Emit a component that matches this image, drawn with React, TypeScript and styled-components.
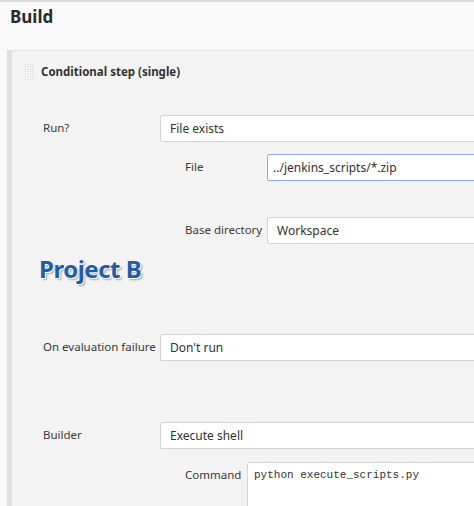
import styled, { createGlobalStyle } from "styled-components";

const GlobalStyle = createGlobalStyle`
  html, body {
    margin: 0;
    padding: 0;
    background: #fafafa;
    overflow: hidden;
  }
  body {
    font-family: "Noto Sans", "Open Sans", Arial, sans-serif;
    color: #333;
  }
`;

const Page = styled.div`
  width: 474px;
  height: 506px;
  overflow: hidden;
  border-top: 2px solid #dcdcdc;
  box-sizing: border-box;
`;

const TopBar = styled.header`
  height: 48px;
  padding-left: 10px;
  background: #f9f9f9;
`;

const PageTitle = styled.h2`
  margin: 0;
  padding-top: 3px;
  font-size: 17px;
  font-weight: 700;
  color: #2b2b2b;
  line-height: 24px;
`;

const Panel = styled.section`
  margin-left: 7px;
  width: 560px;
  min-height: 460px;
  background: #f3f3f3;
  border-top: 1px solid #e2e2e2;
  border-left: 5px solid #e0e0e0;
`;

const StepHeader = styled.div`
  display: flex;
  align-items: center;
  gap: 7px;
  padding: 12px 0 0 12px;
`;

const DragHandle = styled.span`
  width: 10px;
  height: 17px;
  background-color: #f7f7f7;
  background-image: radial-gradient(circle, #cfcfcf 0.6px, transparent 0.9px);
  background-size: 2.5px 2.5px;
`;

const StepTitle = styled.h3`
  margin: 0;
  font-size: 11.5px;
  font-weight: 700;
  color: #333;
`;

const Form = styled.div`
  display: flex;
  flex-direction: column;
  padding-left: 31px;
`;

const Row = styled.div<{ $top: number; $indent?: number; $labelWidth: number }>`
  display: grid;
  grid-template-columns: ${(p) => p.$labelWidth}px 1fr;
  align-items: start;
  margin-top: ${(p) => p.$top}px;
  padding-left: ${(p) => p.$indent ?? 0}px;
`;

const Label = styled.label`
  font-size: 11.5px;
  line-height: 26px;
  color: #3a3a3a;
  white-space: nowrap;
`;

const SelectBox = styled.div`
  height: 27px;
  box-sizing: border-box;
  padding: 0 9px;
  display: flex;
  align-items: center;
  background: #fff;
  border: 1px solid #d4d4d4;
  border-radius: 2px;
  font-size: 12px;
  color: #333;
`;

const TextInput = styled.div<{ $focused?: boolean }>`
  height: 27px;
  box-sizing: border-box;
  padding: 0 5px;
  display: flex;
  align-items: center;
  background: #fff;
  border: 1px solid ${(p) => (p.$focused ? "#8eaae6" : "#d4d4d4")};
  border-radius: 2px;
  font-size: 12px;
  color: #333;
`;

const CodeArea = styled.div`
  height: 60px;
  box-sizing: border-box;
  padding: 4px 6px;
  background: #fff;
  border: 1px solid #d4d4d4;
  border-radius: 2px;
  font-family: "Liberation Mono", "DejaVu Sans Mono", monospace;
  font-size: 11px;
  line-height: 16px;
  color: #333;
`;

const Annotation = styled.div`
  margin: 9px 0 0 -4px;
  font-size: 24px;
  font-weight: 700;
  letter-spacing: -0.5px;
  color: #1f5cab;
  text-shadow: 0 0 2px #fff, 1px 1px 0 #fff, 2px 2px 2px rgba(0, 0, 0, 0.35);
  line-height: 32px;
`;

export default function App() {
  return (
    <>
      <GlobalStyle />
      <Page>
        <TopBar>
          <PageTitle>Build</PageTitle>
        </TopBar>
        <Panel>
          <StepHeader>
            <DragHandle />
            <StepTitle>Conditional step (single)</StepTitle>
          </StepHeader>
          <Form>
            <Row $top={35} $labelWidth={117}>
              <Label>Run?</Label>
              <SelectBox>File exists</SelectBox>
            </Row>
            <Row $top={12} $indent={142} $labelWidth={82}>
              <Label>File</Label>
              <TextInput $focused>../jenkins_scripts/*.zip</TextInput>
            </Row>
            <Row $top={36} $indent={142} $labelWidth={82}>
              <Label>Base directory</Label>
              <SelectBox>Workspace</SelectBox>
            </Row>
            <Annotation>Project B</Annotation>
            <Row $top={49} $labelWidth={117}>
              <Label>On evaluation failure</Label>
              <SelectBox>Don't run</SelectBox>
            </Row>
            <Row $top={61} $labelWidth={117}>
              <Label>Builder</Label>
              <SelectBox>Execute shell</SelectBox>
            </Row>
            <Row $top={13} $indent={142} $labelWidth={62}>
              <Label>Command</Label>
              <CodeArea>python execute_scripts.py</CodeArea>
            </Row>
          </Form>
        </Panel>
      </Page>
    </>
  );
}
